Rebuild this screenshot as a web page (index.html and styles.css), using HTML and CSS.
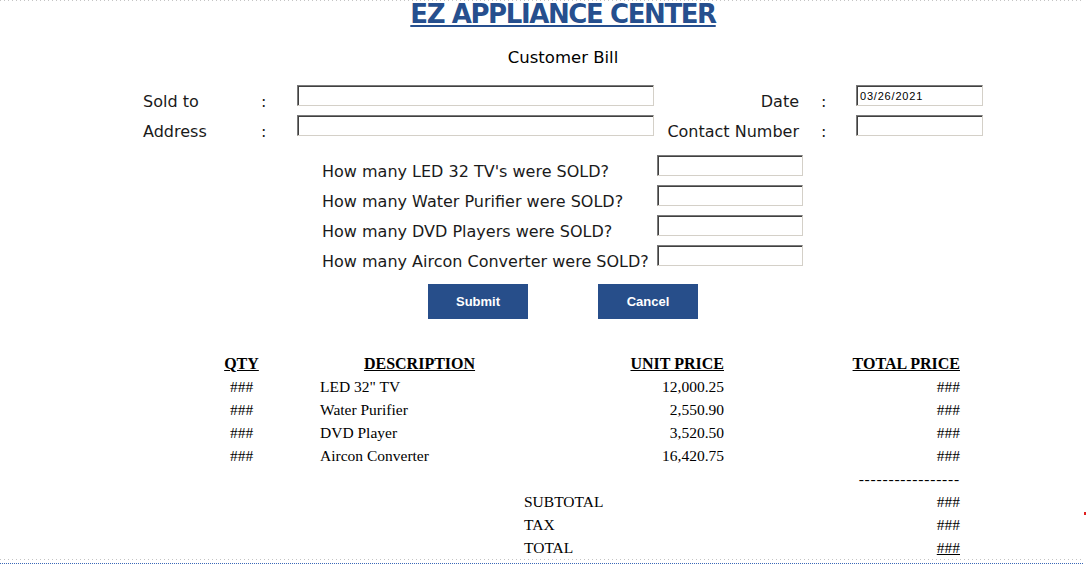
FILE: index.html
```html
<!DOCTYPE html>
<html lang="en">
<head>
<meta charset="utf-8">
<title>EZ Appliance Center - Customer Bill</title>
<link rel="stylesheet" href="styles.css">
</head>
<body>
<div class="sheet">
  <header class="head">
    <h1 class="title">EZ APPLIANCE CENTER</h1>
    <div class="subtitle">Customer Bill</div>
  </header>

  <div class="customer">
    <div class="lbl">Sold to</div>
    <div class="lbl colon">:</div>
    <div class="field"></div>
    <div class="lbl rlbl">Date</div>
    <div class="lbl colon2">:</div>
    <div class="field date">03/26/2021</div>

    <div class="lbl">Address</div>
    <div class="lbl colon">:</div>
    <div class="field"></div>
    <div class="lbl rlbl">Contact Number</div>
    <div class="lbl colon2">:</div>
    <div class="field"></div>
  </div>

  <div class="questions">
    <div class="lbl">How many LED 32 TV's were SOLD?</div>
    <div class="field"></div>
    <div class="lbl">How many Water Purifier were SOLD?</div>
    <div class="field"></div>
    <div class="lbl">How many DVD Players were SOLD?</div>
    <div class="field"></div>
    <div class="lbl">How many Aircon Converter were SOLD?</div>
    <div class="field"></div>
  </div>

  <div class="actions">
    <button class="btn" type="button">Submit</button>
    <button class="btn" type="button">Cancel</button>
  </div>

  <div class="bill">
    <div class="c-qty hd">QTY</div>
    <div class="c-desc hd center">DESCRIPTION</div>
    <div class="c-num hd">UNIT PRICE</div>
    <div class="c-num hd">TOTAL PRICE</div>

    <div class="c-qty">###</div>
    <div class="c-desc">LED 32" TV</div>
    <div class="c-num">12,000.25</div>
    <div class="c-num">###</div>

    <div class="c-qty">###</div>
    <div class="c-desc">Water Purifier</div>
    <div class="c-num">2,550.90</div>
    <div class="c-num">###</div>

    <div class="c-qty">###</div>
    <div class="c-desc">DVD Player</div>
    <div class="c-num">3,520.50</div>
    <div class="c-num">###</div>

    <div class="c-qty">###</div>
    <div class="c-desc">Aircon Converter</div>
    <div class="c-num">16,420.75</div>
    <div class="c-num">###</div>

    <div></div><div></div><div></div>
    <div class="c-num dashes">-----------------</div>

    <div></div><div></div>
    <div class="c-sum">SUBTOTAL</div>
    <div class="c-num">###</div>

    <div></div><div></div>
    <div class="c-sum">TAX</div>
    <div class="c-num">###</div>

    <div></div><div></div>
    <div class="c-sum">TOTAL</div>
    <div class="c-num"><span class="ul">###</span></div>
  </div>

  <span class="mark"></span>
</div>
</body>
</html>
```

FILE: styles.css
```css
html, body {
  margin: 0;
  padding: 0;
  background: #ffffff;
}

.sheet {
  position: relative;
  width: 1086px;
  height: 567px;
  overflow: hidden;
  font-family: "DejaVu Sans", Verdana, sans-serif;
  color: #111111;
  background:
    repeating-linear-gradient(90deg, #c4c4c4 0 1px, transparent 1px 4px) 0 0 / 1084px 1px no-repeat,
    repeating-linear-gradient(90deg, #c4c4c4 0 1px, transparent 1px 4px) 0 559px / 1084px 1px no-repeat,
    repeating-linear-gradient(90deg, #3a68b8 0 1px, transparent 1px 2px) 0 563px / 1084px 1px no-repeat,
    #ffffff;
}

/* ---------- heading ---------- */
.head {
  padding-left: 40px;
  text-align: center;
}

.title {
  margin: 0;
  font-size: 26px;
  font-weight: bold;
  line-height: 28px;
  letter-spacing: -1.4px;
  color: #264f8e;
  text-decoration: underline;
  text-decoration-thickness: 2px;
  text-underline-offset: 2px;
}

.subtitle {
  margin-top: 20px;
  font-size: 16.5px;
  line-height: 20px;
  color: #000000;
}

/* ---------- form fields ---------- */
.lbl {
  padding-top: 8px;
  font-size: 16px;
  line-height: 20px;
  white-space: nowrap;
  color: #1a1a1a;
}

.field {
  box-sizing: border-box;
  height: 21px;
  margin-top: 1px;
  border-style: solid;
  border-width: 1px;
  border-color: #7a7a7a #d4d0c8 #d4d0c8 #7a7a7a;
  box-shadow: inset 1px 1px 0 #404040;
  background: #ffffff;
}

.field.date {
  padding: 4px 0 0 3px;
  font-family: "Liberation Sans", Arial, sans-serif;
  font-size: 11px;
  line-height: 12px;
  letter-spacing: 0.8px;
  color: #000000;
}

.customer {
  display: grid;
  grid-template-columns: 118px 36px 357px 145px 57px 127px;
  grid-auto-rows: 30px;
  margin: 16px 0 0 143px;
}

.rlbl {
  text-align: right;
}

.colon2 {
  padding-left: 22px;
}

.questions {
  display: grid;
  grid-template-columns: 335px 146px;
  grid-auto-rows: 30px;
  margin: 10px 0 0 322px;
}

/* ---------- buttons ---------- */
.actions {
  display: flex;
  gap: 70px;
  margin: 10px 0 0 428px;
}

.btn {
  width: 100px;
  height: 35px;
  padding: 0;
  border: none;
  background: #274e8a;
  color: #ffffff;
  font-family: "Liberation Sans", Arial, sans-serif;
  font-size: 13px;
  font-weight: bold;
}

/* ---------- bill table ---------- */
.bill {
  display: grid;
  grid-template-columns: 63px 246px 205px 236px;
  grid-auto-rows: 23px;
  margin: 33px 0 0 210px;
  font-family: "Liberation Serif", "Times New Roman", serif;
  font-size: 15.5px;
  line-height: 23px;
  color: #000000;
}

.hd {
  font-size: 16px;
  font-weight: bold;
  text-decoration: underline;
}

.c-qty {
  text-align: center;
}

.c-desc {
  padding-left: 47px;
}

.c-desc.center {
  text-align: center;
}

.c-num {
  text-align: right;
}

.c-sum {
  padding-left: 5px;
}

.dashes {
  letter-spacing: 0.8px;
}

.ul {
  text-decoration: underline;
}

.mark {
  position: absolute;
  top: 512px;
  right: 0;
  width: 2px;
  height: 3px;
  background: #e02020;
}
```
